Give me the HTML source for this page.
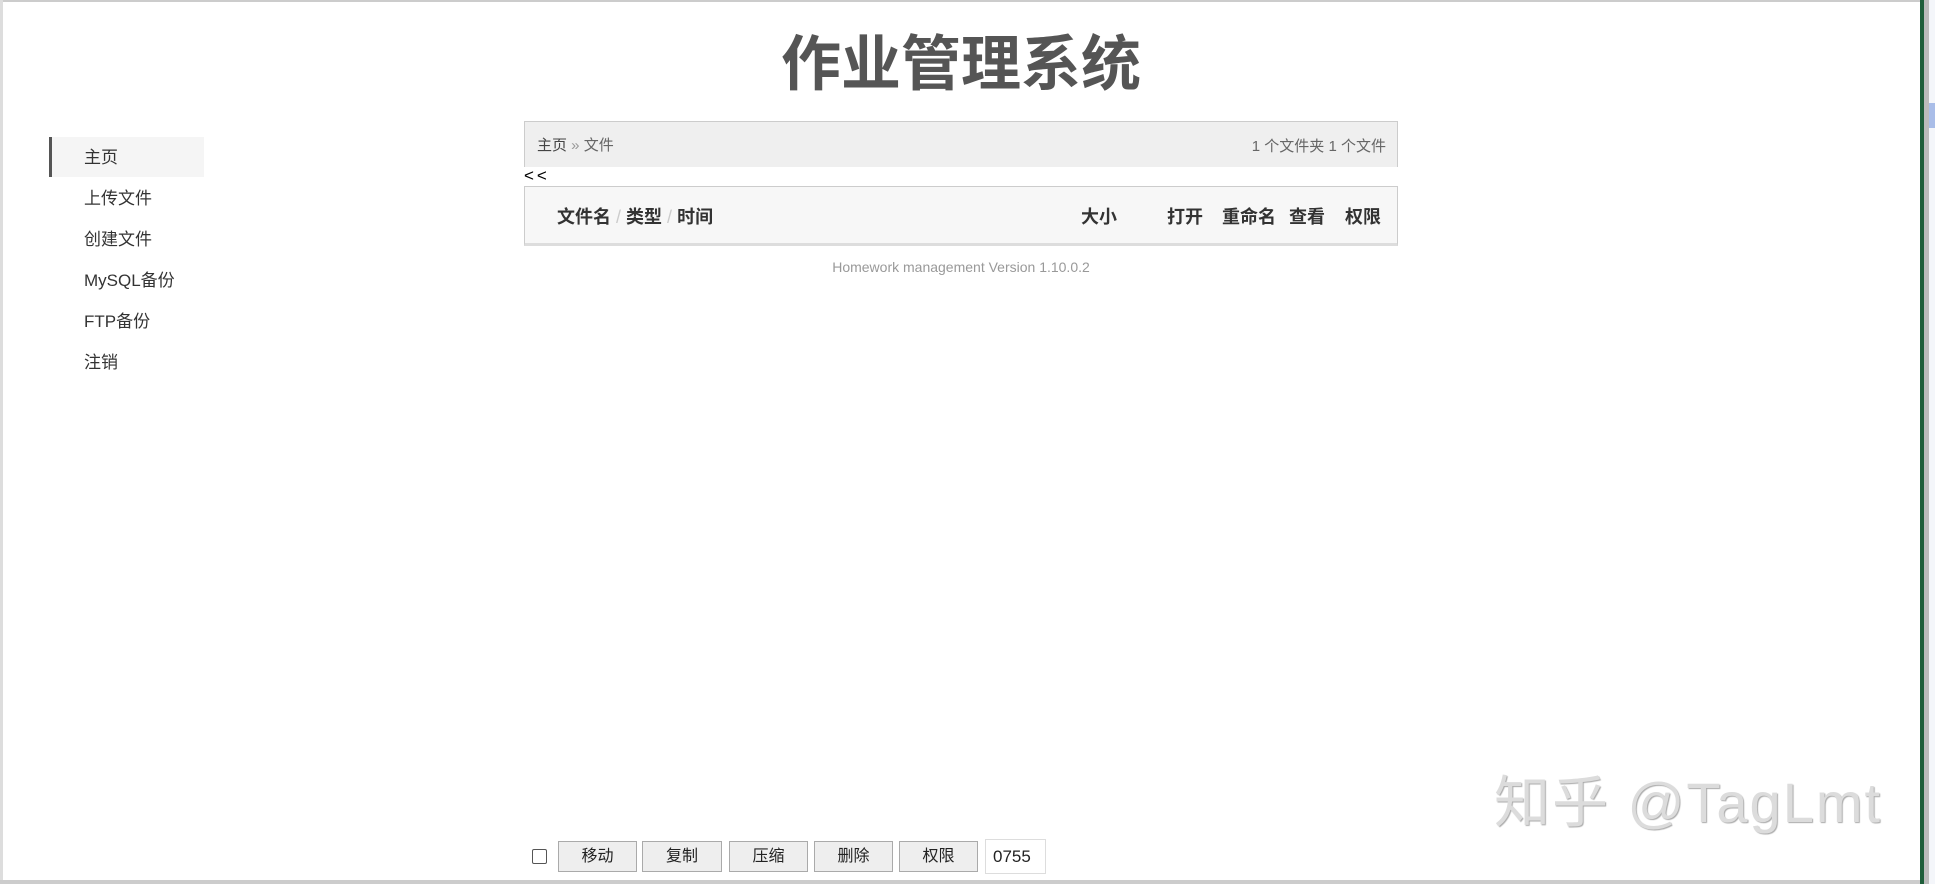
<!DOCTYPE html>
<html><head><meta charset="utf-8"><style>
*{margin:0;padding:0;box-sizing:border-box}
body{width:1935px;height:884px;position:relative;background:#fff;overflow:hidden;font-family:"Liberation Sans","Noto Sans CJK SC",sans-serif;color:#333}
.a{position:absolute;white-space:nowrap}
.nav{font-size:17px;color:#333;left:84px}
.hd{font-size:18px;font-weight:bold;color:#333;top:203px}
.btn{position:absolute;top:841px;height:31px;background:#eee;border:1px solid #aaa;font-size:16px;text-align:center;line-height:29px;color:#222}
</style></head><body>
<div class="a" style="left:0;top:0;width:1920px;height:2px;background:#ccc"></div>
<div class="a" style="left:0;top:0;width:3px;height:884px;background:#ddd"></div>
<div class="a" style="left:0;top:880px;width:1920px;height:4px;background:#ccc"></div>
<div class="a" style="left:1920px;top:0;width:4px;height:884px;background:#1e5e3a"></div>
<div class="a" style="left:1924px;top:0;width:5px;height:884px;background:#bbb"></div>
<div class="a" style="left:1929px;top:0;width:6px;height:884px;background:#f4f6fa"></div>
<div class="a" style="left:1929px;top:103px;width:6px;height:25px;background:#a9bde8"></div>

<div class="a" style="left:0;width:1922px;top:25px;text-align:center;font-size:60px;font-weight:bold;color:#555;line-height:80px">作业管理系统</div>

<div class="a" style="left:49px;top:137px;width:155px;height:40px;background:#f5f5f5;border-left:3px solid #555"></div>
<div class="a nav" style="top:143px">主页</div>
<div class="a nav" style="top:184px">上传文件</div>
<div class="a nav" style="top:225px">创建文件</div>
<div class="a nav" style="top:266px">MySQL备份</div>
<div class="a nav" style="top:307px">FTP备份</div>
<div class="a nav" style="top:348px">注销</div>

<div class="a" style="left:524px;top:121px;width:874px;height:46px;background:#efefef;border:1px solid #ccc;border-bottom:none"></div>
<div class="a" style="left:537px;top:134px;font-size:15px;color:#444">主页 <span style="color:#999">»</span> <span style="color:#666">文件</span></div>
<div class="a" style="right:549px;top:135px;font-size:15px;color:#666">1 个文件夹 1 个文件</div>
<div class="a" style="left:524px;top:166px;font-size:17px;color:#000;letter-spacing:3px">&lt;&lt;</div>
<div class="a" style="left:524px;top:186px;width:874px;height:60px;background:#f7f7f7;border:1px solid #ccc;border-bottom:3px solid #ddd"></div>
<div class="a hd" style="left:557px">文件名 <span style="color:#ccc;font-weight:normal">/</span> 类型 <span style="color:#ccc;font-weight:normal">/</span> 时间</div>
<div class="a hd" style="left:1081px">大小</div>
<div class="a hd" style="left:1167px">打开</div>
<div class="a hd" style="left:1222px">重命名</div>
<div class="a hd" style="left:1289px">查看</div>
<div class="a hd" style="left:1345px">权限</div>
<div class="a" style="left:524px;width:874px;top:259px;text-align:center;font-size:14px;color:#999">Homework management Version 1.10.0.2</div>

<div class="a" style="left:1494px;top:758px;font-size:56px;color:#dcdcdc;text-shadow:1px 1px 1px #aaa;letter-spacing:2px">知乎 @TagLmt</div>

<div class="a" style="left:532px;top:849px;width:15px;height:15px;border:1px solid #555;border-radius:2px;background:#fff"></div>
<div class="btn" style="left:558px;width:79px">移动</div>
<div class="btn" style="left:642px;width:80px">复制</div>
<div class="btn" style="left:729px;width:79px">压缩</div>
<div class="btn" style="left:814px;width:79px">删除</div>
<div class="btn" style="left:899px;width:79px">权限</div>
<div class="a" style="left:985px;top:839px;width:61px;height:35px;border:1px solid #ddd;font-size:17px;line-height:33px;padding-left:7px;color:#222">0755</div>
</body></html>
